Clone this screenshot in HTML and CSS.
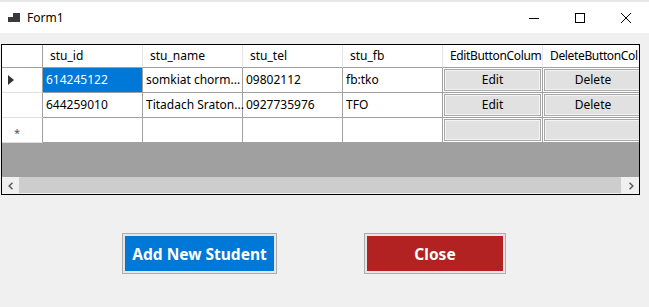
FILE: index.html
```html
<!DOCTYPE html>
<html>
<head>
<meta charset="utf-8">
<link rel="stylesheet" href="styles.css">
</head>
<body>
<div class="window">
  <div class="titlebar">
    <svg class="appicon" width="12" height="10" viewBox="0 0 12 10"><rect x="0" y="4" width="5" height="5" fill="#3a3a3a"/><rect x="5" y="0" width="7" height="9" fill="#3a3a3a"/></svg>
    <span class="title">Form1</span>
    <div class="controls">
      <div class="ctl"><svg width="12" height="12" viewBox="0 0 12 12"><line x1="1" y1="6.5" x2="11" y2="6.5" stroke="#000" stroke-width="1"/></svg></div>
      <div class="ctl"><svg width="12" height="12" viewBox="0 0 12 12"><rect x="1.5" y="1.5" width="9" height="9" fill="none" stroke="#000" stroke-width="1"/></svg></div>
      <div class="ctl"><svg width="12" height="12" viewBox="0 0 12 12"><path d="M1 1 L11 11 M11 1 L1 11" stroke="#000" stroke-width="1"/></svg></div>
    </div>
  </div>
  <div class="content">
    <div class="grid">
      <div class="rows">
        <div class="row header">
          <div class="rh"></div>
          <div class="hc">stu_id</div>
          <div class="hc">stu_name</div>
          <div class="hc">stu_tel</div>
          <div class="hc">stu_fb</div>
          <div class="hc narrow">EditButtonColum</div>
          <div class="hc narrow last">DeleteButtonCol</div>
        </div>
        <div class="row data">
          <div class="rh"><span class="arrow"></span></div>
          <div class="c sel">614245122</div>
          <div class="c">somkiat chorm...</div>
          <div class="c">09802112</div>
          <div class="c">fb:tko</div>
          <div class="c bc"><div class="btn">Edit</div></div>
          <div class="c bc"><div class="btn">Delete</div></div>
        </div>
        <div class="row data">
          <div class="rh"></div>
          <div class="c">644259010</div>
          <div class="c">Titadach Sraton...</div>
          <div class="c">0927735976</div>
          <div class="c">TFO</div>
          <div class="c bc"><div class="btn">Edit</div></div>
          <div class="c bc"><div class="btn">Delete</div></div>
        </div>
        <div class="row data">
          <div class="rh"><span class="star">*</span></div>
          <div class="c"></div>
          <div class="c"></div>
          <div class="c"></div>
          <div class="c"></div>
          <div class="c bc"><div class="btn"></div></div>
          <div class="c bc"><div class="btn"></div></div>
        </div>
      </div>
      <div class="empty"></div>
      <div class="hscroll">
        <div class="sarrow"><svg width="8" height="8" viewBox="0 0 8 8"><path d="M5.5 0.8 L2.2 4 L5.5 7.2" fill="none" stroke="#606060" stroke-width="1.6"/></svg></div>
        <div class="thumb"></div>
        <div class="sarrow"><svg width="8" height="8" viewBox="0 0 8 8"><path d="M2.5 0.8 L5.8 4 L2.5 7.2" fill="none" stroke="#606060" stroke-width="1.6"/></svg></div>
      </div>
    </div>
    <div class="actions">
      <div class="wbtn add"><span>Add New Student</span></div>
      <div class="wbtn close"><span>Close</span></div>
    </div>
  </div>
</div>
</body>
</html>
```
FILE: styles.css
```css
* { box-sizing: border-box; }
html, body { margin: 0; padding: 0; }
body {
  width: 649px;
  height: 307px;
  overflow: hidden;
  background: #f0f0f0;
  font-family: "Noto Sans", "Open Sans", "DejaVu Sans", sans-serif;
  color: #000;
}
.titlebar {
  height: 33px;
  background: #fff;
  border-top: 2px solid #e8e8e8;
  display: flex;
  align-items: center;
  padding-left: 8px;
}
.appicon { margin-top: 1px; }
.title {
  margin-left: 7px;
  font-size: 12px;
  color: #000;
}
.controls {
  margin-left: auto;
  display: flex;
  height: 31px;
}
.ctl {
  width: 46px;
  display: flex;
  align-items: center;
  justify-content: center;
}
.content { padding-top: 11px; padding-left: 1px; }
.grid {
  width: 639px;
  height: 151px;
  border: 1px solid #000;
  overflow: hidden;
  display: flex;
  flex-direction: column;
  background: #a0a0a0;
}
.rows { background: #fff; }
.row {
  display: flex;
  width: 637px;
  overflow: hidden;
}
.row.header { height: 23px; }
.row.data { height: 25px; }
.rh {
  width: 41px;
  flex: none;
  border-right: 1px solid #a0a0a0;
  border-bottom: 1px solid #e0e0e0;
  background: #fff;
  display: flex;
  align-items: center;
  padding-left: 6px;
}
.header .rh { border-bottom: 1px solid #a0a0a0; }
.hc {
  width: 100px;
  flex: none;
  border-right: 1px solid #e5e5e5;
  border-bottom: 1px solid #a0a0a0;
  font-size: 12px;
  line-height: 21px;
  padding-left: 7px;
  white-space: nowrap;
  overflow: hidden;
}
.hc.narrow { letter-spacing: -0.35px; }
.hc.last { width: 96px; border-right: none; }
.c {
  width: 100px;
  flex: none;
  border-right: 1px solid #a0a0a0;
  border-bottom: 1px solid #a0a0a0;
  font-size: 12px;
  line-height: 23px;
  padding-left: 3px;
  white-space: nowrap;
}
.row.data .c:last-child { width: 96px; border-right: none; }
.c.sel { background: #0078d7; color: #fff; }
.c.bc { padding: 1px; }
.btn {
  height: 22px;
  border: 1px solid #a8a8a8;
  box-shadow: inset 0 0 0 1px #f4f4f4;
  background: #e1e1e1;
  text-align: center;
  line-height: 20px;
  font-size: 12px;
}
.row.data .c:last-child .btn { width: 98px; }
.arrow {
  width: 0; height: 0;
  border-top: 5px solid transparent;
  border-bottom: 5px solid transparent;
  border-left: 6px solid #333;
}
.star {
  font-size: 11px;
  color: #555;
  margin-left: 6px;
  margin-top: 5px;
}
.empty { flex: 1; }
.hscroll {
  height: 17px;
  background: #f0f0f0;
  display: flex;
  align-items: stretch;
}
.sarrow {
  width: 17px;
  display: flex;
  align-items: center;
  justify-content: center;
}
.thumb {
  flex: 1;
  margin: 0 1px 1px 0;
  background: #cdcdcd;
}
.actions {
  display: flex;
  margin-top: 38px;
  padding-left: 121px;
  gap: 87px;
}
.wbtn {
  height: 41px;
  border: 1px solid #adadad;
  padding: 2px;
  background: #e5e5e5;
}
.wbtn span {
  display: flex;
  height: 100%;
  align-items: center;
  justify-content: center;
  color: #fff;
  font-weight: bold;
  font-size: 15.5px;
}
.add { width: 155px; }
.add span { background: #0078d7; }
.close { width: 142px; }
.close span { background: #b22222; }
```
